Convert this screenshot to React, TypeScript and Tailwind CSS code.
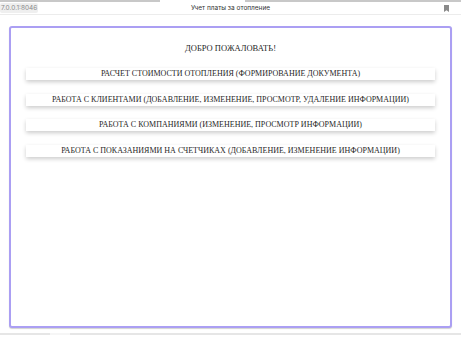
const items = [
  "РАСЧЕТ СТОИМОСТИ ОТОПЛЕНИЯ (ФОРМИРОВАНИЕ ДОКУМЕНТА)",
  "РАБОТА С КЛИЕНТАМИ (ДОБАВЛЕНИЕ, ИЗМЕНЕНИЕ, ПРОСМОТР, УДАЛЕНИЕ ИНФОРМАЦИИ)",
  "РАБОТА С КОМПАНИЯМИ (ИЗМЕНЕНИЕ, ПРОСМОТР ИНФОРМАЦИИ)",
  "РАБОТА С ПОКАЗАНИЯМИ НА СЧЕТЧИКАХ (ДОБАВЛЕНИЕ, ИЗМЕНЕНИЕ ИНФОРМАЦИИ)",
];

export default function App() {
  return (
    <div className="relative h-[337px] w-[461px] overflow-hidden bg-white">
      {/* верхняя полоска */}
      <div className="flex h-[2px]">
        <div className="w-[160px] bg-[#c8c8c8]" />
        <div className="w-[85px]" />
        <div className="flex-1 bg-[#c8c8c8]" />
      </div>

      {/* шапка */}
      <header className="relative flex h-[13px] items-center border-b border-[#ececec] font-[family-name:Inter,sans-serif]">
        <span className="rounded-[2px] bg-[#efefef] px-[1px] text-[6.5px] leading-[10px] text-[#8a8a8a]">
          7.0.0.1:8046
        </span>
        <span className="absolute inset-0 flex items-center justify-center pt-[2px] text-[6.5px] text-[#333]">
          Учет платы за отопление
        </span>
        <svg className="absolute right-[12px] top-[3px]" width="5" height="7" viewBox="0 0 5 7">
          <path d="M0 0H5V7L2.5 5.3L0 7Z" fill="#8a8a8a" />
        </svg>
      </header>

      {/* основная рамка */}
      <main className="mx-[9px] mt-[11px] h-[302px] rounded-[3px] border-2 border-[#ab9ff3] bg-white font-[family-name:Liberation_Serif,serif] text-[#1f1f1f] shadow-[0_1px_1px_rgba(0,0,0,0.18)]">
        <h1 className="mt-[15px] text-center text-[8.5px] leading-[10px]">ДОБРО ПОЖАЛОВАТЬ!</h1>
        <div className="mt-[15px] flex flex-col gap-[13.5px] px-[15px]">
          {items.map((t) => (
            <div
              key={t}
              className="flex h-[12px] items-center justify-center bg-white text-[8px] leading-[12px] shadow-[0_2px_4px_rgba(0,0,0,0.2)]"
            >
              {t}
            </div>
          ))}
        </div>
      </main>

      {/* нижняя полоска */}
      <div className="absolute bottom-[2px] left-0 right-0 flex h-[2px]">
        <div className="w-[50px] bg-[#e6e6e6]" />
        <div className="w-[20px] bg-[#f6f6f6]" />
        <div className="flex-1 bg-[#e6e6e6]" />
      </div>
    </div>
  );
}
